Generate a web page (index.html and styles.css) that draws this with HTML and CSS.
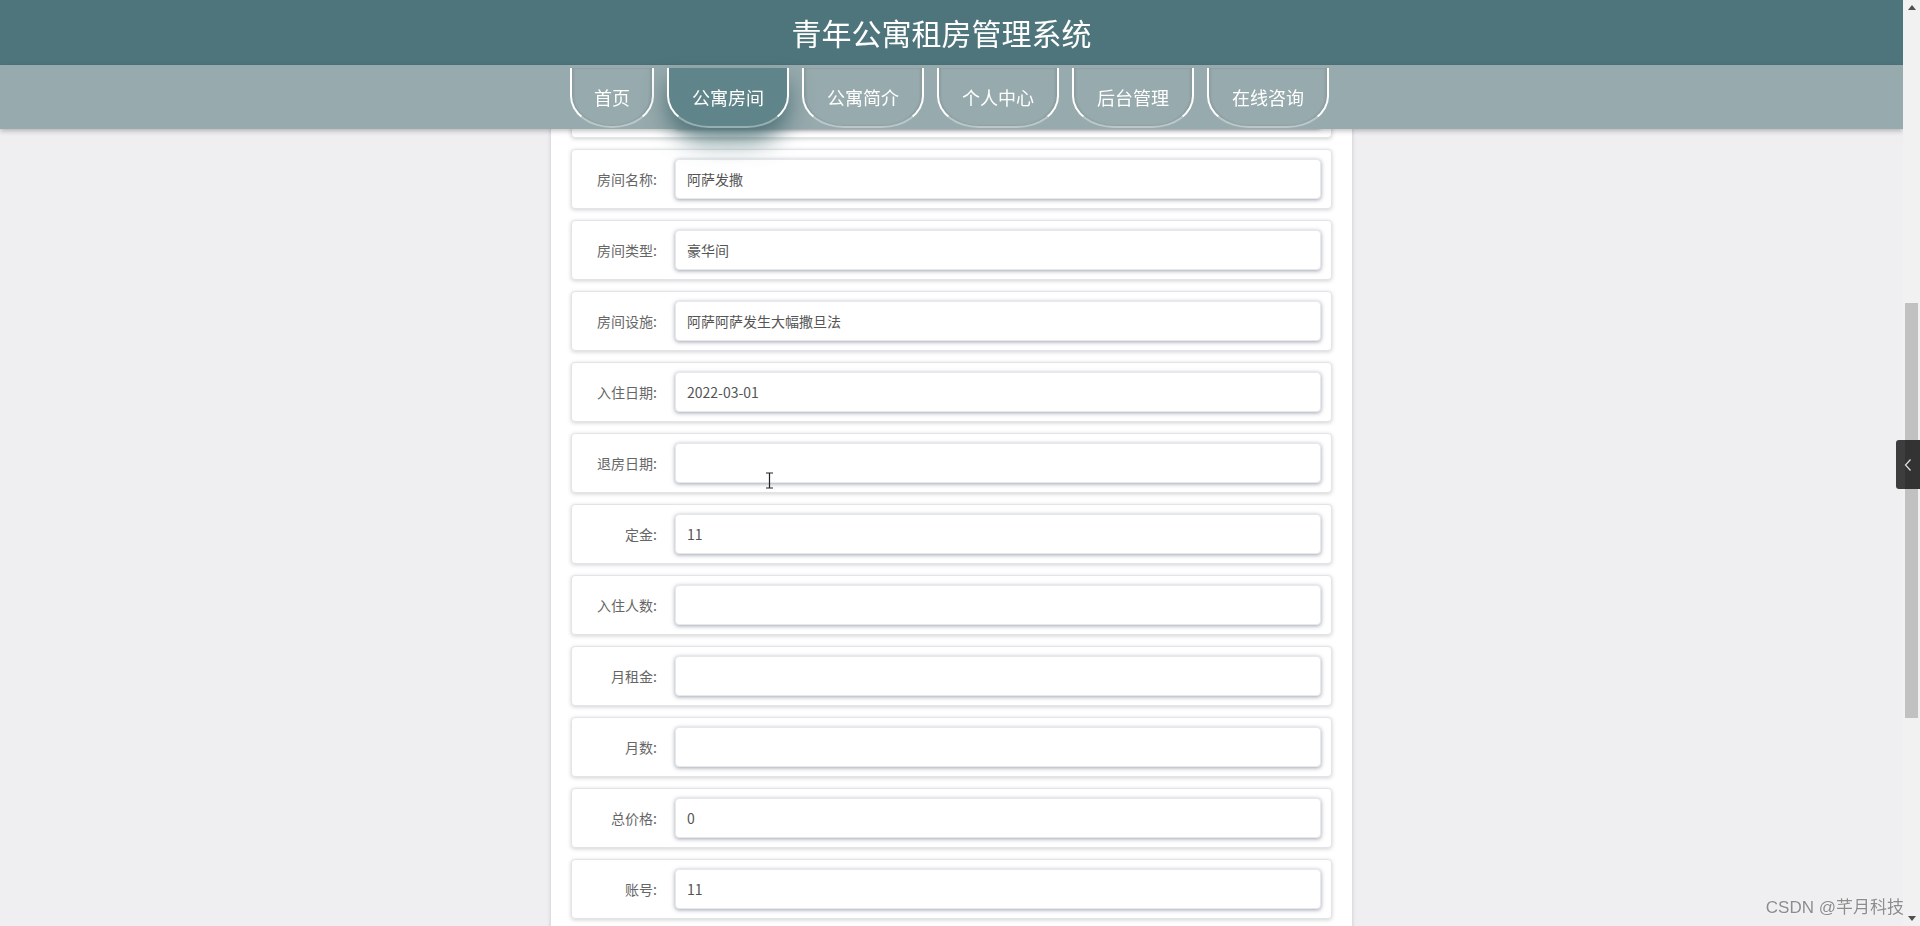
FILE: index.html
```html
<!DOCTYPE html>
<html lang="zh-CN">
<head>
    <meta charset="UTF-8">
    <meta name="viewport" content="width=device-width, initial-scale=1.0">
    <title>青年公寓租房管理系统</title>
    <link rel="stylesheet" href="styles.css">
</head>
<body>

    <!-- 顶部标题和导航 -->
    <div class="header">
        <div class="title-bar">青年公寓租房管理系统</div>
        <div class="nav-bar">
            <a class="nav-tab" href="#">首页</a>
            <a class="nav-tab active" href="#">公寓房间</a>
            <a class="nav-tab" href="#">公寓简介</a>
            <a class="nav-tab" href="#">个人中心</a>
            <a class="nav-tab" href="#">后台管理</a>
            <a class="nav-tab" href="#">在线咨询</a>
        </div>
    </div>

    <!-- 表单 -->
    <div class="main">
        <div class="panel">
            <div class="form-row">
                <input class="form-input" value="">
            </div>
            <div class="form-row">
                <label class="form-label">房间名称:</label>
                <input class="form-input" value="阿萨发撒">
            </div>
            <div class="form-row">
                <label class="form-label">房间类型:</label>
                <input class="form-input" value="豪华间">
            </div>
            <div class="form-row">
                <label class="form-label">房间设施:</label>
                <input class="form-input" value="阿萨阿萨发生大幅撒旦法">
            </div>
            <div class="form-row">
                <label class="form-label">入住日期:</label>
                <input class="form-input" value="2022-03-01">
            </div>
            <div class="form-row">
                <label class="form-label">退房日期:</label>
                <input class="form-input" value="">
            </div>
            <div class="form-row">
                <label class="form-label">定金:</label>
                <input class="form-input" value="11">
            </div>
            <div class="form-row">
                <label class="form-label">入住人数:</label>
                <input class="form-input" value="">
            </div>
            <div class="form-row">
                <label class="form-label">月租金:</label>
                <input class="form-input" value="">
            </div>
            <div class="form-row">
                <label class="form-label">月数:</label>
                <input class="form-input" value="">
            </div>
            <div class="form-row">
                <label class="form-label">总价格:</label>
                <input class="form-input" value="0">
            </div>
            <div class="form-row">
                <label class="form-label">账号:</label>
                <input class="form-input" value="11">
            </div>
        </div>
    </div>

    <!-- 文本光标 -->
    <svg class="text-cursor" width="9" height="17" viewBox="0 0 9 17">
        <path d="M1 1h7M1 16h7M4.5 1v15" stroke="#222" stroke-width="1.2" fill="none"/>
    </svg>

    <!-- 右侧收起按钮 -->
    <div class="side-toggle">
        <svg width="8" height="14" viewBox="0 0 8 14">
            <path d="M6.5 1.5L1.5 7l5 5.5" stroke="#ddd" stroke-width="1.3" fill="none"/>
        </svg>
    </div>

    <!-- 滚动条 -->
    <div class="scrollbar">
        <div class="scroll-arrow up"></div>
        <div class="scroll-thumb"></div>
        <div class="scroll-arrow down"></div>
    </div>

    <div class="watermark">CSDN @芊月科技</div>

</body>
</html>
```

FILE: styles.css
```css
* {
    margin: 0;
    padding: 0;
    box-sizing: border-box;
}

body {
    width: 1920px;
    height: 926px;
    overflow: hidden;
    background: #efeff1;
    font-family: "Noto Sans CJK SC", "Liberation Sans", sans-serif;
    color: #555;
}

/* 顶部 */
.header {
    position: fixed;
    top: 0;
    left: 0;
    width: 1903px;
    z-index: 10;
}

.title-bar {
    height: 65px;
    background: #4f757c;
    color: #fff;
    font-size: 30px;
    line-height: 65px;
    text-align: center;
    padding-right: 20px;
}

.nav-bar {
    height: 64px;
    background: #97aaad;
    display: flex;
    justify-content: center;
    gap: 13px;
    padding-top: 3px;
    padding-right: 4px;
    box-shadow: 0 2px 5px rgba(0, 0, 0, 0.25);
}

.nav-tab {
    height: 60px;
    padding: 0 23px;
    color: #fff;
    font-size: 18px;
    line-height: 58px;
    text-decoration: none;
    border: 2px solid #fff;
    border-top: none;
    border-bottom-color: rgba(255, 255, 255, 0.35);
    border-radius: 0 0 42px 42px / 0 0 32px 32px;
    box-shadow: inset 2px 0 2px rgba(0, 0, 0, 0.08), inset -2px 0 2px rgba(0, 0, 0, 0.08);
}

.nav-tab:first-child {
    padding: 0 22px;
}

.nav-tab.active {
    background: #5f8489;
    box-shadow: 0 14px 22px rgba(60, 100, 106, 0.75);
}

/* 表单 */
.main {
    width: 1903px;
    display: flex;
    justify-content: center;
}

.panel {
    width: 801px;
    min-height: 1000px;
    background: #fff;
    padding: 78px 20px 0 20px;
    display: flex;
    flex-direction: column;
    gap: 11px;
    box-shadow: 0 0 4px rgba(0, 0, 0, 0.18);
}

.form-row {
    height: 60px;
    display: flex;
    align-items: center;
    justify-content: flex-end;
    padding-right: 10px;
    background: #fff;
    border: 1px solid #e2e5e7;
    border-radius: 4px;
    box-shadow: 0 1px 4px rgba(0, 0, 0, 0.18);
}

.form-label {
    width: 84px;
    margin-right: 18px;
    text-align: right;
    font-size: 14px;
    color: #666;
}

.form-input {
    flex: 0 0 646px;
    height: 40px;
    padding: 0 11px;
    font-family: "Noto Sans CJK SC", "Liberation Sans", sans-serif;
    font-size: 14px;
    color: #555;
    background: #fff;
    border: 1px solid #e6e8ea;
    border-radius: 4px;
    outline: none;
    box-shadow: 0 1px 4px rgba(75, 88, 110, 0.55);
}

/* 覆盖层 */
.text-cursor {
    position: fixed;
    left: 765px;
    top: 472px;
    z-index: 20;
}

.side-toggle {
    position: fixed;
    right: 0;
    top: 440px;
    width: 24px;
    height: 49px;
    background: linear-gradient(90deg, #3d3d3d 0, #3d3d3d 9px, #333 9px);
    border-radius: 3px 0 0 3px;
    display: flex;
    align-items: center;
    padding-left: 8px;
    z-index: 30;
}

.scrollbar {
    position: fixed;
    top: 0;
    right: 0;
    width: 17px;
    height: 926px;
    background: #f1f1f1;
    z-index: 25;
}

.scroll-thumb {
    position: absolute;
    left: 2px;
    top: 303px;
    width: 13px;
    height: 415px;
    background: #c1c1c1;
}

.scroll-arrow {
    position: absolute;
    left: 5px;
    width: 0;
    height: 0;
    border-left: 4px solid transparent;
    border-right: 4px solid transparent;
}

.scroll-arrow.up {
    top: 5px;
    border-bottom: 5px solid #505050;
}

.scroll-arrow.down {
    bottom: 5px;
    border-top: 5px solid #505050;
}

.watermark {
    position: fixed;
    right: 16px;
    bottom: 8px;
    font-family: "Liberation Sans", "Noto Sans CJK SC", sans-serif;
    font-size: 17px;
    color: #8c8c8c;
    text-shadow: 0 0 2px rgba(255, 255, 255, 0.8);
    z-index: 20;
}
```
